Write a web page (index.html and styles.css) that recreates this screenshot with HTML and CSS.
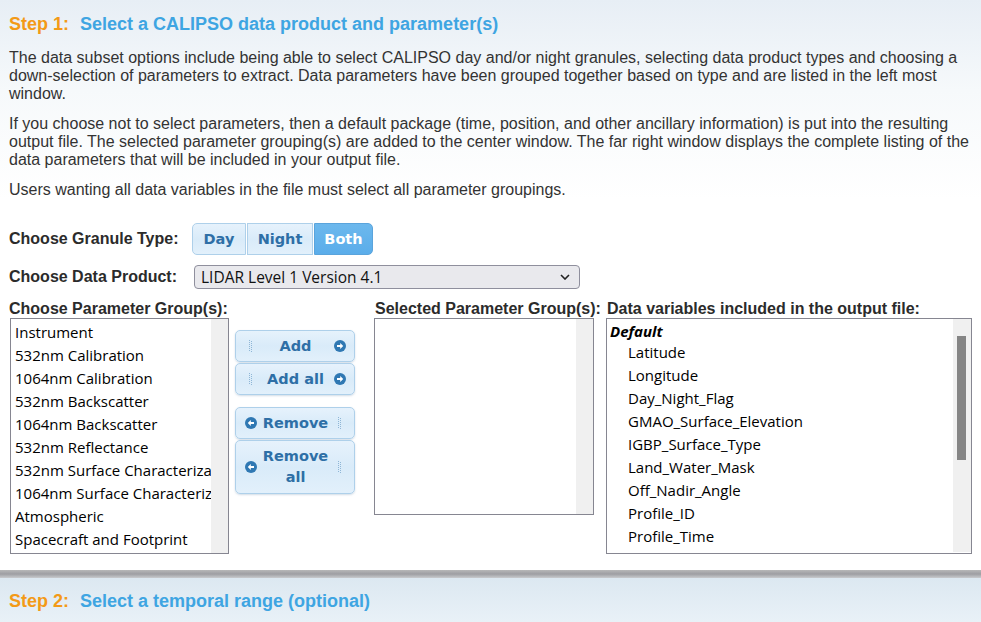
FILE: index.html
```html
<!DOCTYPE html>
<html>
<head>
<meta charset="utf-8">
<link rel="stylesheet" href="styles.css">
</head>
<body>
<section class="step step1">
  <h2 class="step-title"><span class="step-num">Step 1:</span> <span class="step-text">Select a CALIPSO data product and parameter(s)</span></h2>
  <p>The data subset options include being able to select CALIPSO day and/or night granules, selecting data product types and choosing a down-selection of parameters to extract. Data parameters have been grouped together based on type and are listed in the left most window.</p>
  <p>If you choose not to select parameters, then a default package (time, position, and other ancillary information) is put into the resulting output file. The selected parameter grouping(s) are added to the center window. The far right window displays the complete listing of the data parameters that will be included in your output file.</p>
  <p>Users wanting all data variables in the file must select all parameter groupings.</p>

  <div class="form-grid">
    <label class="form-label">Choose Granule Type:</label>
    <div class="seg">
      <button class="ui-btn seg-first">Day</button>
      <button class="ui-btn seg-mid">Night</button>
      <button class="ui-btn seg-last active">Both</button>
    </div>
    <label class="form-label">Choose Data Product:</label>
    <div class="select">
      <span class="select-text">LIDAR Level 1 Version 4.1</span>
      <svg class="chev" width="10" height="6" viewBox="0 0 10 6"><polyline points="1,1 5,5 9,1" fill="none" stroke="#222" stroke-width="1.6"/></svg>
    </div>
  </div>

  <div class="param-grid">
    <div class="col-label">Choose Parameter Group(s):</div>
    <div></div>
    <div class="col-label shifted">Selected Parameter Group(s):</div>
    <div class="col-label shifted">Data variables included in the output file:</div>

    <div class="listbox tall box-left">
      <div class="list-items">
        <div class="item">Instrument</div>
        <div class="item">532nm Calibration</div>
        <div class="item">1064nm Calibration</div>
        <div class="item">532nm Backscatter</div>
        <div class="item">1064nm Backscatter</div>
        <div class="item">532nm Reflectance</div>
        <div class="item">532nm Surface Characterization</div>
        <div class="item">1064nm Surface Characterization</div>
        <div class="item">Atmospheric</div>
        <div class="item">Spacecraft and Footprint</div>
      </div>
      <div class="track"></div>
    </div>

    <div class="btn-col">
      <button class="ui-btn move-btn">
        <svg class="grip" width="4" height="12" viewBox="0 0 4 12"><g fill="#8fb6d6"><rect x="0" y="0" width="1" height="1"/><rect x="0" y="2" width="1" height="1"/><rect x="0" y="4" width="1" height="1"/><rect x="0" y="6" width="1" height="1"/><rect x="0" y="8" width="1" height="1"/><rect x="0" y="10" width="1" height="1"/><rect x="2" y="1" width="1" height="1"/><rect x="2" y="3" width="1" height="1"/><rect x="2" y="5" width="1" height="1"/><rect x="2" y="7" width="1" height="1"/><rect x="2" y="9" width="1" height="1"/><rect x="2" y="11" width="1" height="1"/></g></svg>
        <span class="btn-text">Add</span>
        <svg class="circ" width="12" height="12" viewBox="0 0 12 12"><circle cx="6" cy="6" r="6" fill="#2f78b3"/><path d="M3 5h3.2V3l3 3-3 3V7H3z" fill="#fff"/></svg>
      </button>
      <button class="ui-btn move-btn">
        <svg class="grip" width="4" height="12" viewBox="0 0 4 12"><g fill="#8fb6d6"><rect x="0" y="0" width="1" height="1"/><rect x="0" y="2" width="1" height="1"/><rect x="0" y="4" width="1" height="1"/><rect x="0" y="6" width="1" height="1"/><rect x="0" y="8" width="1" height="1"/><rect x="0" y="10" width="1" height="1"/><rect x="2" y="1" width="1" height="1"/><rect x="2" y="3" width="1" height="1"/><rect x="2" y="5" width="1" height="1"/><rect x="2" y="7" width="1" height="1"/><rect x="2" y="9" width="1" height="1"/><rect x="2" y="11" width="1" height="1"/></g></svg>
        <span class="btn-text">Add all</span>
        <svg class="circ" width="12" height="12" viewBox="0 0 12 12"><circle cx="6" cy="6" r="6" fill="#2f78b3"/><path d="M3 5h3.2V3l3 3-3 3V7H3z" fill="#fff"/></svg>
      </button>
      <div class="btn-gap"></div>
      <button class="ui-btn move-btn">
        <svg class="circ" width="12" height="12" viewBox="0 0 12 12"><circle cx="6" cy="6" r="6" fill="#2f78b3"/><path d="M9 5H5.8V3l-3 3 3 3V7H9z" fill="#fff"/></svg>
        <span class="btn-text">Remove</span>
        <svg class="grip" width="4" height="12" viewBox="0 0 4 12"><g fill="#8fb6d6"><rect x="0" y="0" width="1" height="1"/><rect x="0" y="2" width="1" height="1"/><rect x="0" y="4" width="1" height="1"/><rect x="0" y="6" width="1" height="1"/><rect x="0" y="8" width="1" height="1"/><rect x="0" y="10" width="1" height="1"/><rect x="2" y="1" width="1" height="1"/><rect x="2" y="3" width="1" height="1"/><rect x="2" y="5" width="1" height="1"/><rect x="2" y="7" width="1" height="1"/><rect x="2" y="9" width="1" height="1"/><rect x="2" y="11" width="1" height="1"/></g></svg>
      </button>
      <button class="ui-btn move-btn two-line">
        <svg class="circ" width="12" height="12" viewBox="0 0 12 12"><circle cx="6" cy="6" r="6" fill="#2f78b3"/><path d="M9 5H5.8V3l-3 3 3 3V7H9z" fill="#fff"/></svg>
        <span class="btn-text">Remove all</span>
        <svg class="grip" width="4" height="12" viewBox="0 0 4 12"><g fill="#8fb6d6"><rect x="0" y="0" width="1" height="1"/><rect x="0" y="2" width="1" height="1"/><rect x="0" y="4" width="1" height="1"/><rect x="0" y="6" width="1" height="1"/><rect x="0" y="8" width="1" height="1"/><rect x="0" y="10" width="1" height="1"/><rect x="2" y="1" width="1" height="1"/><rect x="2" y="3" width="1" height="1"/><rect x="2" y="5" width="1" height="1"/><rect x="2" y="7" width="1" height="1"/><rect x="2" y="9" width="1" height="1"/><rect x="2" y="11" width="1" height="1"/></g></svg>
      </button>
    </div>

    <div class="listbox short">
      <div class="list-items"></div>
      <div class="track"></div>
    </div>

    <div class="listbox tall box-right">
      <div class="list-items">
        <div class="item group">Default</div>
        <div class="item sub">Latitude</div>
        <div class="item sub">Longitude</div>
        <div class="item sub">Day_Night_Flag</div>
        <div class="item sub">GMAO_Surface_Elevation</div>
        <div class="item sub">IGBP_Surface_Type</div>
        <div class="item sub">Land_Water_Mask</div>
        <div class="item sub">Off_Nadir_Angle</div>
        <div class="item sub">Profile_ID</div>
        <div class="item sub">Profile_Time</div>
        <div class="item sub">Profile_UTC_Time</div>
      </div>
      <div class="track wide"><div class="thumb"></div></div>
    </div>
  </div>
</section>
<div class="divider"></div>
<section class="step step2">
  <h2 class="step-title"><span class="step-num">Step 2:</span> <span class="step-text">Select a temporal range (optional)</span></h2>
</section>
</body>
</html>
```

FILE: styles.css
```css
html, body {
  margin: 0;
  padding: 0;
  background: #fff;
}
body {
  font-family: "Liberation Sans", Arial, sans-serif;
  color: #333;
  width: 981px;
  height: 622px;
  overflow: hidden;
}
.step {
  padding: 0 9px;
}
.step1 {
  padding-top: 14px;
  padding-bottom: 16px;
  background: linear-gradient(to bottom, #e7eef5 0px, #f6f9fb 90px, #ffffff 200px);
}
.step-title {
  margin: 0;
  font-size: 18px;
  line-height: 21px;
  font-weight: bold;
}
.step-num {
  color: #f39a17;
}
.step-text {
  color: #3ea5e2;
  margin-left: 6px;
}
p {
  margin: 0;
  font-size: 16px;
  line-height: 18px;
  color: #333;
}
.step-title + p {
  margin-top: 14px;
}
p + p {
  margin-top: 12px;
}
.form-grid {
  margin-top: 24px;
  display: grid;
  grid-template-columns: 183px auto;
  row-gap: 10px;
  align-items: center;
  justify-content: start;
}
.form-label,
.col-label {
  font-size: 16px;
  font-weight: bold;
  color: #2b2b2b;
  white-space: nowrap;
  line-height: 18px;
}
.seg {
  display: flex;
  gap: 1px;
}
.ui-btn {
  font-family: "DejaVu Sans", sans-serif;
  font-weight: bold;
  font-size: 14.5px;
  color: #2e6fa6;
  background: linear-gradient(to bottom, #e6f2fc 0%, #d9ebf9 50%, #e2f0fb 100%);
  border: 1px solid #aed0ea;
  padding: 5px 0;
  line-height: 20px;
  margin: 0;
  cursor: pointer;
}
.seg .ui-btn {
  border-radius: 0;
}
.seg .seg-first {
  border-radius: 5px 0 0 5px;
  width: 54px;
}
.seg .seg-mid {
  width: 66px;
}
.seg .seg-last {
  border-radius: 0 5px 5px 0;
  width: 59px;
}
.ui-btn.active {
  background: linear-gradient(to bottom, #6cb8ed 0%, #5badea 100%);
  border-color: #5aa4dc;
  color: #fff;
}
.select {
  margin-left: 2px;
  height: 22px;
  border: 1px solid #8f8f9d;
  border-radius: 4px;
  background: #e9e9ed;
  display: flex;
  align-items: center;
  justify-content: space-between;
  padding: 0 9px 0 6px;
  box-sizing: content-box;
  width: 369px;
}
.select-text {
  font-family: "Open Sans", sans-serif;
  font-size: 15.5px;
  color: #111;
}
.chev {
  display: block;
}
.param-grid {
  margin-top: 11px;
  display: grid;
  grid-template-columns: 226px 139px 232px 366px;
  grid-template-rows: auto auto;
  row-gap: 0;
}
.col-label.shifted {
  margin-left: 1px;
}
.listbox {
  box-sizing: border-box;
  border: 1px solid #868691;
  background: #fff;
  display: flex;
  overflow: hidden;
}
.listbox.tall {
  height: 236px;
}
.listbox.short {
  height: 197px;
  width: 220px;
}
.box-left {
  margin-left: 1px;
  width: 219px;
}
.box-right {
  width: 366px;
}
.list-items {
  flex: 1;
  min-width: 0;
  padding-top: 2px;
  padding-left: 4px;
  overflow: hidden;
  font-family: "Open Sans", sans-serif;
  font-size: 15px;
  color: #000;
}
.item {
  line-height: 23px;
  white-space: nowrap;
  overflow: hidden;
}
.item.group {
  font-weight: bold;
  font-style: italic;
  line-height: 20px;
  margin-left: -1px;
}
.item.sub {
  padding-left: 17px;
}
.track {
  width: 17px;
  flex: none;
  background: #f0f0f0;
}
.track.wide {
  width: 18px;
  margin-bottom: 1px;
}
.thumb {
  margin: 17px 0 0 4px;
  width: 9px;
  height: 124px;
  background: #858585;
}
.btn-col {
  padding-top: 12px;
  display: flex;
  flex-direction: column;
  gap: 1px;
}
.btn-gap {
  height: 10px;
}
.move-btn {
  width: 120px;
  border-radius: 5px;
  display: flex;
  align-items: center;
  justify-content: space-between;
  padding: 5px 8px 5px 9px;
  line-height: 20px;
  box-shadow: 0 1px 2px rgba(80, 120, 160, 0.25);
}
.move-btn.two-line {
  line-height: 21px;
}
.move-btn .btn-text {
  flex: 1;
  text-align: center;
  padding: 0 2px;
}
.grip {
  display: block;
  flex: none;
  margin: 0 4px;
}
.circ {
  display: block;
  flex: none;
}
.divider {
  height: 8px;
  background: linear-gradient(to bottom, #b8b8b8 0%, #9e9ea2 50%, #c9cbce 100%);
}
.step2 {
  padding-top: 13px;
  height: 36px;
  background: linear-gradient(to bottom, #dce8f1 0%, #eaf2f8 100%);
}
```
